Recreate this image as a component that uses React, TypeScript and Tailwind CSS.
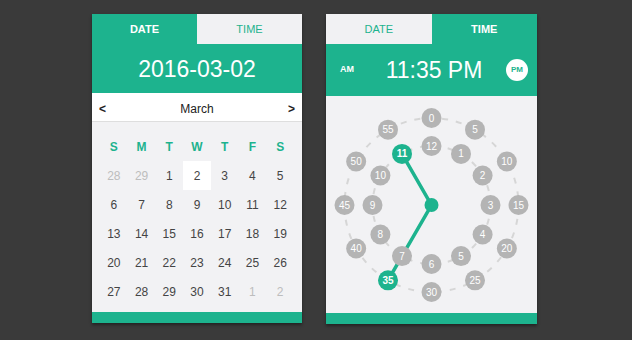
import React from "react";

const TEAL = "#1db38e";

const weeks: { d: number; muted?: boolean }[][] = [
    [{ d: 28, muted: true }, { d: 29, muted: true }, { d: 1 }, { d: 2 }, { d: 3 }, { d: 4 }, { d: 5 }],
    [{ d: 6 }, { d: 7 }, { d: 8 }, { d: 9 }, { d: 10 }, { d: 11 }, { d: 12 }],
    [{ d: 13 }, { d: 14 }, { d: 15 }, { d: 16 }, { d: 17 }, { d: 18 }, { d: 19 }],
    [{ d: 20 }, { d: 21 }, { d: 22 }, { d: 23 }, { d: 24 }, { d: 25 }, { d: 26 }],
    [{ d: 27 }, { d: 28 }, { d: 29 }, { d: 30 }, { d: 31 }, { d: 1, muted: true }, { d: 2, muted: true }],
];

function Tabs({ active }: { active: "date" | "time" }) {
    const on = "flex-1 flex items-center justify-center bg-[#1db38e] text-white font-bold";
    const off = "flex-1 flex items-center justify-center bg-[#f1f1f3] text-[#1db38e]";
    return (
        <div className="flex h-[30px] text-[11px] uppercase">
            <div className={active === "date" ? on : off}>Date</div>
            <div className={active === "time" ? on : off}>Time</div>
        </div>
    );
}

function DateCard() {
    return (
        <div className="w-[210px] flex flex-col shadow-[0_2px_3px_rgba(0,0,0,0.4)]">
            <Tabs active="date" />
            <div className="h-[49px] bg-[#1db38e] flex items-center justify-center text-white text-[23px] leading-none pt-[1px]">
                2016-03-02
            </div>
            <div className="h-[29px] bg-white border-b border-[#dedede] flex items-center justify-between px-[7px] pt-[3px] text-[12px] text-[#222]">
                <span className="font-bold">&lt;</span>
                <span>March</span>
                <span className="font-bold">&gt;</span>
            </div>
            <div className="h-[190px] bg-[#f2f2f4] px-[8px] pt-[10px]">
                <div className="grid grid-cols-7 h-[29px] items-center text-center text-[12px] font-bold text-[#1db38e]">
                    {["S", "M", "T", "W", "T", "F", "S"].map((d, i) => (
                        <div key={i}>{d}</div>
                    ))}
                </div>
                {weeks.map((w, i) => (
                    <div key={i} className="grid grid-cols-7 h-[29px] text-center text-[12px]">
                        {w.map((c, j) => (
                            <div
                                key={j}
                                className={
                                    "flex items-center justify-center " +
                                    (c.muted ? "text-[#bdbdbd]" : "text-[#444]") +
                                    (i === 0 && c.d === 2 && !c.muted ? " bg-white" : "")
                                }
                            >
                                {c.d}
                            </div>
                        ))}
                    </div>
                ))}
            </div>
            <div className="h-[11px] bg-[#1db38e]" />
        </div>
    );
}

function Clock() {
    const cx = 105.5;
    const cy = 109;
    const outer = 87;
    const inner = 59;
    const pos = (r: number, i: number) => {
        const a = (i * 30 * Math.PI) / 180;
        return { x: cx + r * Math.sin(a), y: cy - r * Math.cos(a) };
    };
    const h11 = pos(inner, 11);
    const m35 = pos(outer, 7);
    const bubble = (x: number, y: number, label: string, sel: boolean, key: string) => (
        <g key={key}>
            <circle cx={x} cy={y} r={10} fill={sel ? TEAL : "#b4b4b4"} />
            <text
                x={x}
                y={y + 3.5}
                textAnchor="middle"
                fontSize={10}
                fill="#fff"
                fontFamily="'Liberation Sans', Arial, sans-serif"
                fontWeight={sel ? 700 : 400}
            >
                {label}
            </text>
        </g>
    );
    return (
        <svg width={211} height={217} className="block">
            <circle cx={cx} cy={cy} r={outer} fill="none" stroke="#d6d6d6" strokeWidth={2} strokeDasharray="6 8" />
            <circle cx={cx} cy={cy} r={inner} fill="none" stroke="#d6d6d6" strokeWidth={2} strokeDasharray="6 8" />
            {/* hands go under the gray bubbles */}
            <line x1={cx} y1={cy} x2={h11.x} y2={h11.y} stroke={TEAL} strokeWidth={3.5} strokeLinecap="round" />
            <line x1={cx} y1={cy} x2={m35.x} y2={m35.y} stroke={TEAL} strokeWidth={3.5} strokeLinecap="round" />
            {Array.from({ length: 12 }).map((_, i) => {
                const p = pos(outer, i);
                return bubble(p.x, p.y, String(i * 5), i === 7, "m" + i);
            })}
            {Array.from({ length: 12 }).map((_, i) => {
                const p = pos(inner, i);
                return bubble(p.x, p.y, String(i === 0 ? 12 : i), i === 11, "h" + i);
            })}
            <circle cx={cx} cy={cy} r={7} fill={TEAL} />
        </svg>
    );
}

function TimeCard() {
    return (
        <div className="w-[211px] flex flex-col shadow-[0_2px_3px_rgba(0,0,0,0.4)]">
            <Tabs active="time" />
            <div className="h-[52px] bg-[#1db38e] flex items-center justify-between pl-[14px] pr-[9px] text-white">
                <span className="text-[9px] font-bold w-[22px]">AM</span>
                <span className="text-[23px] leading-none pt-[1px]">11:35 PM</span>
                <span className="w-[22px] h-[22px] rounded-full bg-white text-[#1db38e] text-[8px] font-bold flex items-center justify-center">
                    PM
                </span>
            </div>
            <div className="h-[217px] bg-[#f2f2f4]">
                <Clock />
            </div>
            <div className="h-[11px] bg-[#1db38e]" />
        </div>
    );
}

export default function App() {
    return (
        <div
            className="w-[632px] h-[340px] bg-[#3a3a3a] flex items-start gap-[24px] pl-[92px] pt-[14px] overflow-hidden"
            style={{ fontFamily: "'Liberation Sans', Arial, sans-serif" }}
        >
            <DateCard />
            <TimeCard />
        </div>
    );
}
